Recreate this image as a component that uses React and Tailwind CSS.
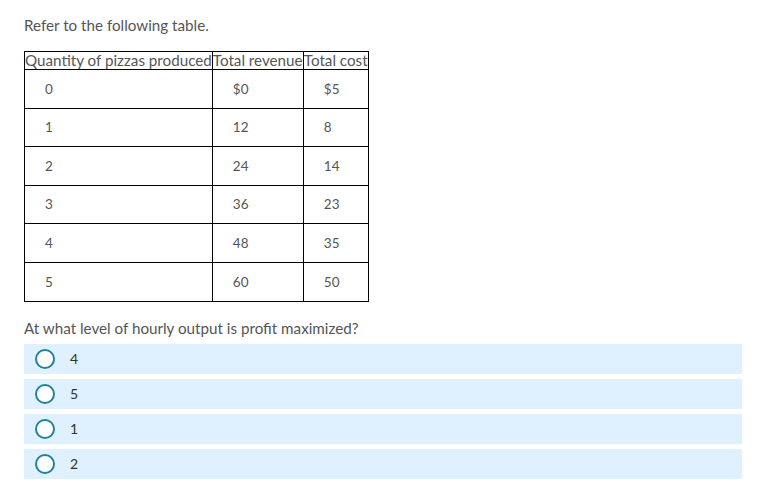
const rows = [
  ["0", "$0", "$5"],
  ["1", "12", "8"],
  ["2", "24", "14"],
  ["3", "36", "23"],
  ["4", "48", "35"],
  ["5", "60", "50"],
];

const options = ["4", "5", "1", "2"];

export default function App() {
  return (
    <div className="bg-white min-h-[499px] pl-[24px] pr-[27px] pt-[13px] font-['Lato',sans-serif] text-[#555]">
      <p className="text-[15.2px] leading-[24px]">Refer to the following table.</p>
      <table className="mt-[14px] border-collapse border border-black text-[15.2px]">
        <thead>
          <tr>
            <th className="border border-black p-0 font-normal leading-[17px] text-left w-[187px] whitespace-nowrap">Quantity of pizzas produced</th>
            <th className="border border-black p-0 font-normal leading-[17px] text-left w-[91px] whitespace-nowrap">Total revenue</th>
            <th className="border border-black p-0 font-normal leading-[17px] text-left w-[65px] whitespace-nowrap">Total cost</th>
          </tr>
        </thead>
        <tbody>
          {rows.map((r, i) => (
            <tr key={i} className="h-[38.6px]">
              {r.map((c, j) => (
                <td key={j} className="border border-black pl-[20px] p-0 text-[13.5px] align-middle">
                  {c}
                </td>
              ))}
            </tr>
          ))}
        </tbody>
      </table>
      <p className="mt-[14px] text-[15.2px] leading-[24px]">At what level of hourly output is profit maximized?</p>
      <div className="mt-[4px] flex flex-col gap-[5px]">
        {options.map((o) => (
          <label key={o} className="flex h-[30px] items-center bg-[#dff0fe]">
            <span className="ml-[11px] h-[20px] w-[20px] rounded-full border-2 border-[#22809b] bg-white" />
            <span className="ml-[15px] text-[14px] text-[#333]">{o}</span>
          </label>
        ))}
      </div>
    </div>
  );
}
